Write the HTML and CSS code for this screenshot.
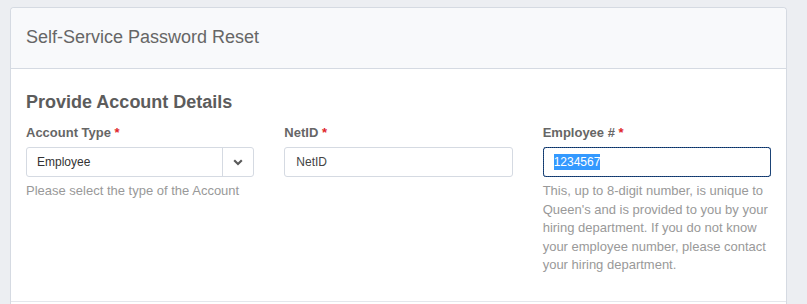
FILE: index.html
```html
<!DOCTYPE html>
<html lang="en">
<head>
    <meta charset="UTF-8">
    <title>Self-Service Password Reset</title>
    <link rel="stylesheet" href="styles.css">
</head>
<body>
    <div class="page">
        <div class="card">
            <div class="card-header">Self-Service Password Reset</div>
            <div class="card-body">
                <h3 class="section-title">Provide Account Details</h3>
                <div class="form-row">
                    <div class="form-group">
                        <label class="form-label">Account Type <span class="required">*</span></label>
                        <div class="select-box">
                            <div class="select-value">Employee</div>
                            <div class="select-toggle">
                                <svg width="10" height="7" viewBox="0 0 10 7"><path d="M1.2 1.3 L5 5 L8.8 1.3" fill="none" stroke="#5a5a5a" stroke-width="2.2"/></svg>
                            </div>
                        </div>
                        <p class="help-text">Please select the type of the Account</p>
                    </div>
                    <div class="form-group">
                        <label class="form-label">NetID <span class="required">*</span></label>
                        <div class="input-box">NetID</div>
                    </div>
                    <div class="form-group">
                        <label class="form-label">Employee # <span class="required">*</span></label>
                        <div class="input-box focused"><span class="selected">1234567</span></div>
                        <p class="help-text">This, up to 8-digit number, is unique to Queen's and is provided to you by your hiring department. If you do not know your employee number, please contact your hiring department.</p>
                    </div>
                </div>
            </div>
            <div class="card-footer"></div>
        </div>
    </div>
</body>
</html>
```

FILE: styles.css
```css
body {
    margin: 0;
    font-family: 'Liberation Sans', Arial, sans-serif;
    background-color: #eceef2;
}
.page {
    padding: 7px 20px 0 10px;
}
.card {
    background: #fff;
    border: 1px solid #d5dae2;
    border-bottom: none;
    border-radius: 4px 4px 0 0;
}
.card-header {
    background-color: #f8f9fb;
    border-bottom: 1px solid #d5dae2;
    border-radius: 4px 4px 0 0;
    padding: 19px 15px 21px;
    font-size: 18px;
    line-height: 20px;
    color: #666;
}
.card-body {
    padding: 22px 15px 16px;
}
.section-title {
    margin: 0 0 10px;
    font-size: 18px;
    line-height: 22px;
    font-weight: bold;
    color: #5c5c5c;
}
.form-row {
    display: grid;
    grid-template-columns: repeat(3, 1fr);
    column-gap: 30px;
}
.form-label {
    display: block;
    font-size: 13px;
    line-height: 20px;
    font-weight: bold;
    color: #666;
    margin-bottom: 4px;
}
.required {
    color: #e0262b;
}
.select-box {
    display: flex;
    height: 30px;
    box-sizing: border-box;
    border: 1px solid #d5dae2;
    border-radius: 3px;
}
.select-value {
    flex: 1;
    padding-left: 10px;
    font-size: 12px;
    line-height: 28px;
    color: #333;
}
.select-toggle {
    width: 30px;
    border-left: 1px solid #d5dae2;
    display: flex;
    align-items: center;
    justify-content: center;
}
.input-box {
    height: 30px;
    box-sizing: border-box;
    border: 1px solid #d5dae2;
    border-radius: 3px;
    padding-left: 11px;
    font-size: 12px;
    line-height: 28px;
    color: #444;
}
.input-box.focused {
    border-color: #2b5a96;
    outline: 1px dotted #0d2c57;
    outline-offset: -1px;
    padding-left: 10px;
}
.selected {
    background-color: #3399ff;
    color: #fff;
    padding: 1px 0;
}
.help-text {
    margin: 5px 0 10px;
    font-size: 13px;
    line-height: 18.5px;
    color: #999;
}
.card-footer {
    border-top: 1px solid #e4e7ec;
    height: 10px;
}
```
